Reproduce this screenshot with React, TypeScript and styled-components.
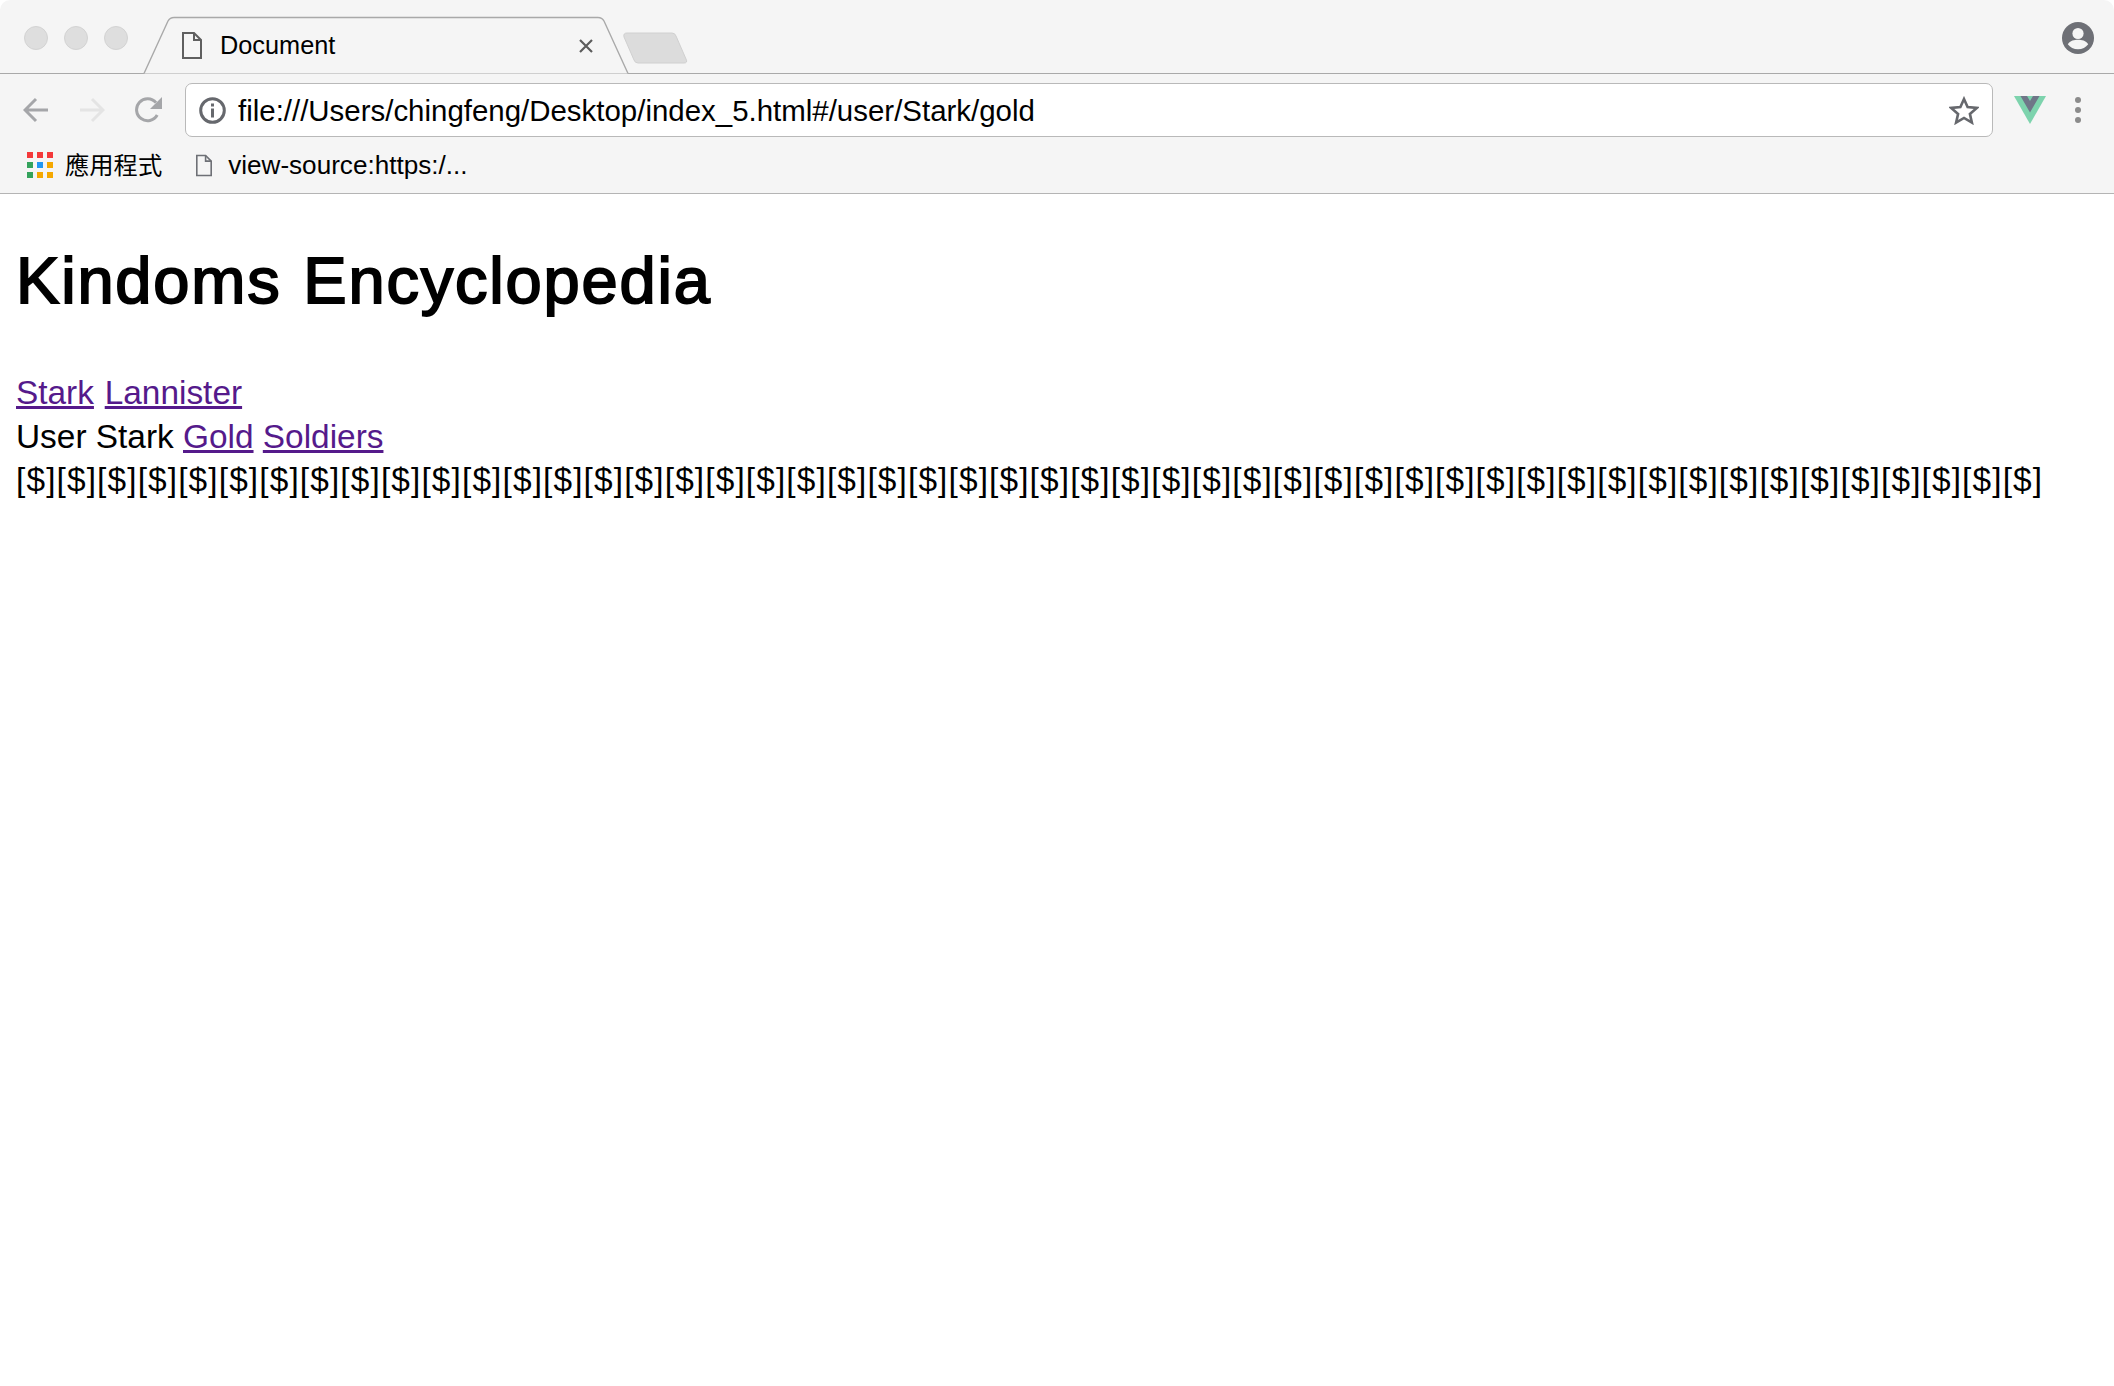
import * as React from 'react';
import styled, { createGlobalStyle } from 'styled-components';

const GlobalStyle = createGlobalStyle`
  html, body {
    margin: 0;
    padding: 0;
    background: #fff;
  }
  body {
    font-family: "Liberation Sans", Arial, sans-serif;
    color: #000;
  }
`;

const APP_COLORS = [
  '#f4393a', '#f4393a', '#f4393a',
  '#34a35c', '#2196f3', '#f5a800',
  '#34a35c', '#f5a800', '#f5a800',
];

const FileIcon = ({ width, height, color }: { width: number; height: number; color: string }) => (
  <svg width={width} height={height} viewBox="0 0 20 27" fill="none" stroke={color} strokeWidth="2">
    <path d="M1 1 H12 L19 8 V26 H1 Z" />
    <path d="M12 1 V8 H19" />
  </svg>
);

const App = () => (
  <>
    <GlobalStyle />
    <Browser>
      <TabStrip>
        <Lights>
          <Light />
          <Light />
          <Light />
        </Lights>
        <Tab>
          <TabShape viewBox="0 0 484 57" preserveAspectRatio="none">
            <path
              d="M0 56.5 L24 4 Q26 0.5 30 0.5 H454 Q458 0.5 460 4 L484 56.5"
              fill="#f5f5f5"
              stroke="#a9a9a9"
              strokeWidth="1.4"
            />
          </TabShape>
          <FileIcon width={20} height={27} color="#5f5f5f" />
          <TabTitle>Document</TabTitle>
          <CloseIcon width="14" height="14" viewBox="0 0 14 14">
            <path d="M1 1 L13 13 M13 1 L1 13" stroke="#5c5c5c" strokeWidth="2.2" />
          </CloseIcon>
        </Tab>
        <NewTab width="66" height="32" viewBox="0 0 66 32">
          <path
            d="M5 1 H50 Q53 1 54 4 L64 27 Q66 31 62 31 H16 Q13 31 12 28 L2 5 Q1 1 5 1 Z"
            fill="#dcdcdc"
            stroke="#d0d0d0"
            strokeWidth="1"
          />
        </NewTab>
        <Avatar width="32" height="32" viewBox="0 0 32 32">
          <circle cx="16" cy="16" r="16" fill="#6e7076" />
          <circle cx="16" cy="11.5" r="5.6" fill="#f5f5f5" />
          <path d="M5.8 22.3 C8 18.6 12.5 17.8 16 17.8 C19.5 17.8 24 18.6 26.2 22.3 C24 25.4 20.2 27.3 16 27.3 C11.8 27.3 8 25.4 5.8 22.3 Z" fill="#f5f5f5" />
        </Avatar>
      </TabStrip>

      <Toolbar>
        <NavButtons>
          <NavIcon viewBox="0 0 26 26" $width={26}>
            <path d="M25 13 H3 M13 2 L2 13 L13 24" fill="none" stroke="#a5a6a9" strokeWidth="3" />
          </NavIcon>
          <NavIcon viewBox="0 0 26 26" $width={26}>
            <path d="M1 13 H23 M13 2 L24 13 L13 24" fill="none" stroke="#e4e4e4" strokeWidth="3" />
          </NavIcon>
          <NavIcon viewBox="0 0 27 26" $width={27}>
            <path d="M22.2 18 A11 11 0 1 1 21 5.6" fill="none" stroke="#a5a6a9" strokeWidth="3" />
            <path d="M27 0 V12 H15 Z" fill="#a5a6a9" />
          </NavIcon>
        </NavButtons>
        <AddressBar>
          <svg width="27" height="27" viewBox="0 0 27 27">
            <circle cx="13.5" cy="13.5" r="11.8" fill="none" stroke="#66686d" strokeWidth="3" />
            <rect x="12" y="11.5" width="3" height="9" fill="#66686d" />
            <rect x="12" y="6.5" width="3" height="3" fill="#66686d" />
          </svg>
          <Url>file:///Users/chingfeng/Desktop/index_5.html#/user/Stark/gold</Url>
          <svg width="30" height="29" viewBox="0 0 30 29">
            <path
              d="M15 3 L18.6 11 L27.8 11.9 L20.9 17.9 L22.9 26.6 L15 22 L7.1 26.6 L9.1 17.9 L2.2 11.9 L11.4 11 Z"
              fill="none"
              stroke="#66686d"
              strokeWidth="2.6"
            />
          </svg>
        </AddressBar>
        <Extensions>
          <svg width="32" height="28" viewBox="0 0 32 28">
            <path d="M0 0 H32 L16 28 Z" fill="#7dd3ad" />
            <path d="M6.5 0 H13 L16 5 L19 0 H25.5 L16 16.5 Z" fill="#6f7688" />
          </svg>
          <svg width="6" height="26" viewBox="0 0 6 26">
            <circle cx="3" cy="3" r="3" fill="#8b8b8b" />
            <circle cx="3" cy="13" r="3" fill="#8b8b8b" />
            <circle cx="3" cy="23" r="3" fill="#8b8b8b" />
          </svg>
        </Extensions>
      </Toolbar>

      <Bookmarks>
        <Bookmark $gap={12}>
          <svg width="26" height="26" viewBox="0 0 26 26">
            {APP_COLORS.map((color, i) => (
              <rect key={i} x={(i % 3) * 10} y={Math.floor(i / 3) * 10} width="6" height="6" fill={color} />
            ))}
          </svg>
          <AppsLabel>應用程式</AppsLabel>
        </Bookmark>
        <Bookmark $gap={16}>
          <FileIcon width={16} height={23} color="#6e7076" />
          <BookmarkLabel>view-source:https:/...</BookmarkLabel>
        </Bookmark>
      </Bookmarks>
    </Browser>

    <Page>
      <Title>Kindoms Encyclopedia</Title>
      <Line $wordGap={1.5}>
        <Link href="#/user/Stark">Stark</Link> <Link href="#/user/Lannister">Lannister</Link>
      </Line>
      <Line $wordGap={0}>
        User Stark <Link href="#/user/Stark/gold">Gold</Link> <Link href="#/user/Stark/soldiers">Soldiers</Link>
      </Line>
      <Coins>{'[$]'.repeat(50)}</Coins>
    </Page>
  </>
);

const Browser = styled.header`
  background: #f5f5f5;
  border-radius: 10px 10px 0 0;
  border-bottom: 1px solid #b4b4b4;
`;

const TabStrip = styled.div`
  display: flex;
  align-items: flex-end;
  height: 73px;
  padding: 0 20px 0 24px;
  border-bottom: 1px solid #a9a9a9;
`;

const Lights = styled.div`
  display: flex;
  gap: 16px;
  align-self: flex-start;
  margin: 26px 16px 0 0;
`;

const Light = styled.span`
  width: 24px;
  height: 24px;
  box-sizing: border-box;
  border-radius: 50%;
  background: #dedede;
  border: 1px solid #d3d3d3;
`;

const Tab = styled.div`
  position: relative;
  display: flex;
  align-items: center;
  width: 484px;
  height: 57px;
  margin-bottom: -1px;
  padding-left: 38px;
  box-sizing: border-box;

  & > svg:nth-child(2) {
    position: relative;
  }
`;

const TabShape = styled.svg`
  position: absolute;
  left: 0;
  top: 0;
  width: 100%;
  height: 100%;
  overflow: visible;
`;

const TabTitle = styled.span`
  position: relative;
  width: 116px;
  margin-left: 18px;
  font-size: 25.3px;
  white-space: nowrap;
  color: #000;
`;

const CloseIcon = styled.svg`
  position: relative;
  margin-left: 243px;
`;

const NewTab = styled.svg`
  margin: 0 0 9px -6px;
`;

const Avatar = styled.svg`
  align-self: flex-start;
  margin: 22px 0 0 auto;
`;

const Toolbar = styled.div`
  display: flex;
  align-items: center;
  height: 54px;
  padding-top: 9px;
`;

const NavButtons = styled.div`
  display: flex;
  align-items: center;
  gap: 30px;
  padding: 0 23px;
`;

const NavIcon = styled.svg<{ $width: number }>`
  width: ${props => props.$width}px;
  height: 26px;
`;

const AddressBar = styled.div`
  display: flex;
  align-items: center;
  width: 1808px;
  height: 54px;
  box-sizing: border-box;
  padding: 0 13px;
  background: #fff;
  border: 1px solid #b9b9b9;
  border-radius: 7px;
`;

const Url = styled.span`
  flex: 1;
  margin-left: 12px;
  padding-top: 2px;
  font-size: 29.45px;
  white-space: nowrap;
`;

const Extensions = styled.div`
  display: flex;
  align-items: center;
  gap: 29px;
  padding-left: 21px;
`;

const Bookmarks = styled.nav`
  display: flex;
  align-items: center;
  gap: 34px;
  height: 56px;
  padding-left: 27px;
`;

const Bookmark = styled.div<{ $gap: number }>`
  display: flex;
  align-items: center;
  gap: ${props => props.$gap}px;
`;

const BookmarkLabel = styled.span`
  font-size: 26.1px;
  white-space: nowrap;
`;

const AppsLabel = styled.span`
  padding-bottom: 3px;
  font-family: "Noto Sans CJK TC", sans-serif;
  font-size: 24.3px;
  white-space: nowrap;
`;

const Page = styled.main`
  padding: 50px 16px 0;
`;

const Title = styled.h1`
  margin: 0 0 53px;
  font-size: 65px;
  line-height: 74px;
  font-weight: 400;
  letter-spacing: 1.8px;
  word-spacing: 2px;
  -webkit-text-stroke: 1.9px #000;
  white-space: nowrap;
`;

const Line = styled.div<{ $wordGap?: number }>`
  font-size: 33.4px;
  line-height: 43.5px;
  word-spacing: ${props => props.$wordGap ?? 0}px;
  white-space: nowrap;
`;

const Coins = styled(Line)`
  letter-spacing: 1.14px;
`;

const Link = styled.a`
  color: #551a8b;
  text-decoration: underline;
`;

export default App;
